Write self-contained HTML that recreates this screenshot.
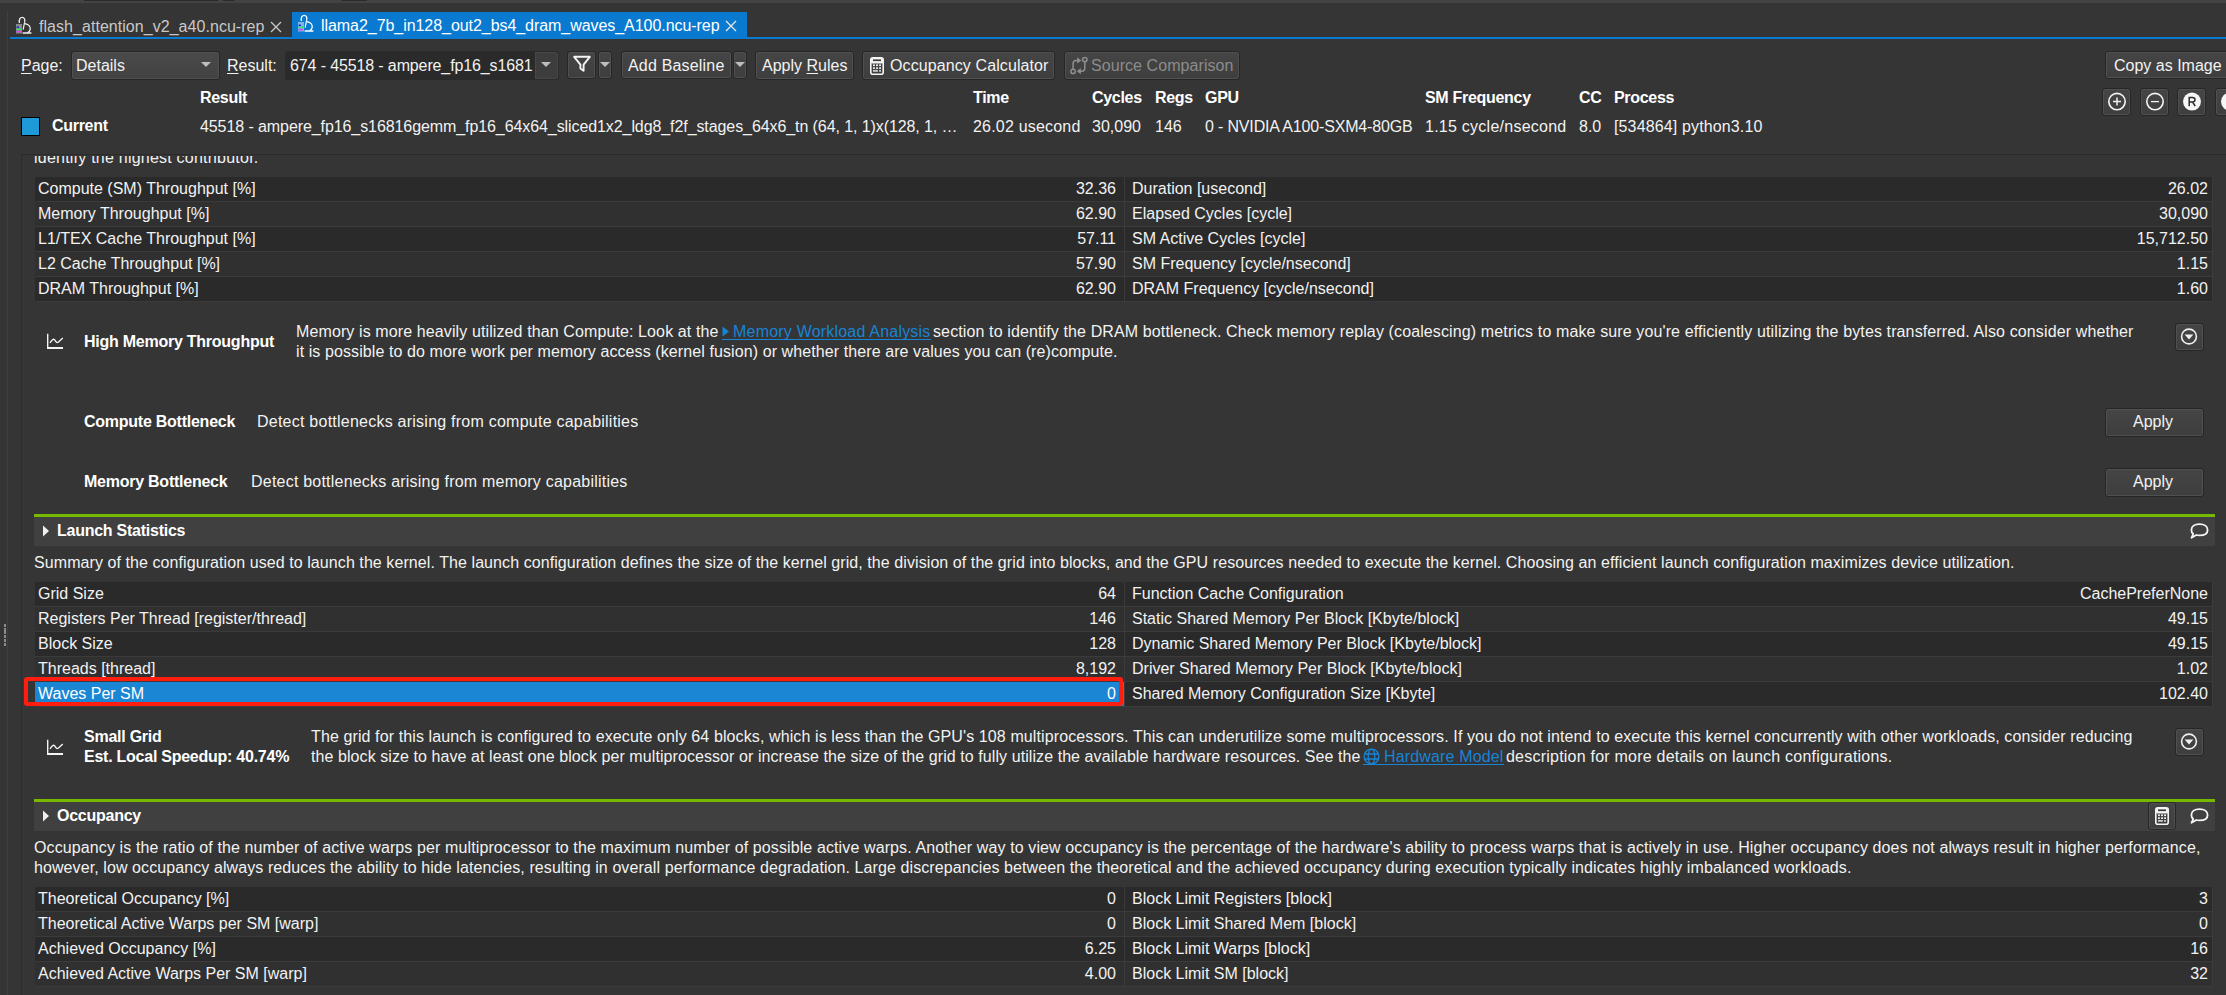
<!DOCTYPE html>
<html><head><meta charset="utf-8"><title>Nsight Compute</title>
<style>
html,body{margin:0;padding:0;}
body{width:2226px;height:995px;overflow:hidden;position:relative;background:#353535;font-family:'Liberation Sans',sans-serif;font-size:16px;color:#f2f2f2;}
u{text-decoration:underline;text-underline-offset:2px;}
</style></head><body>
<div style="position:absolute;left:0px;top:0px;width:2226px;height:3px;background:#434343"></div><div style="position:absolute;left:84px;top:0px;width:134px;height:1px;background:#2a2a2a"></div><div style="position:absolute;left:223px;top:0px;width:11px;height:1px;background:#2a2a2a"></div><div style="position:absolute;left:342px;top:0px;width:25px;height:1px;background:#2a2a2a"></div><div style="position:absolute;left:7px;top:11px;width:1px;height:984px;background:#3f3f3f"></div><div style="position:absolute;left:4px;top:624.0px;width:2px;height:3px;background:#8a8a8a"></div><div style="position:absolute;left:4px;top:627.7px;width:2px;height:3px;background:#8a8a8a"></div><div style="position:absolute;left:4px;top:631.4px;width:2px;height:3px;background:#8a8a8a"></div><div style="position:absolute;left:4px;top:635.1px;width:2px;height:3px;background:#8a8a8a"></div><div style="position:absolute;left:4px;top:638.8px;width:2px;height:3px;background:#8a8a8a"></div><div style="position:absolute;left:4px;top:642.5px;width:2px;height:3px;background:#8a8a8a"></div><div style="position:absolute;left:292px;top:12px;width:455px;height:25px;background:#0a7ad0"></div><div style="position:absolute;left:10px;top:37px;width:2216px;height:2px;background:#0a7ad0"></div><svg style="position:absolute;left:14px;top:15px" width="20" height="20" viewBox="0 0 20 20"><rect x="2" y="9" width="6" height="9.5" fill="#a6a6a6" opacity="0.75"/>
<rect x="2.6" y="11.6" width="2.4" height="1.4" rx="0.6" fill="#1020ff"/><rect x="2.6" y="13.6" width="5" height="1.6" fill="#20f050"/><rect x="2.6" y="15.8" width="4.4" height="1.6" fill="#e040f0"/>
<path d="M5.5 8 C4.6 4.5 6.2 2.4 8.2 2.4 C10.2 2.4 11.4 4.2 10.6 7.4" fill="none" stroke="#f0f0f0" stroke-width="1.3"/>
<path d="M10.6 7.4 C10.2 9.5 9.6 12 9.2 14.6" fill="none" stroke="#f0f0f0" stroke-width="1.2"/>
<path d="M10.8 8.6 C14.6 9.2 16.6 11.8 16.2 14.4 C15.9 16.2 14.8 17.2 13.6 17.6" fill="none" stroke="#f0f0f0" stroke-width="1.3"/>
<path d="M8.6 18 H17.4" stroke="#f0f0f0" stroke-width="1.5"/></svg><div style="position:absolute;top:17px;font-size:16px;line-height:20px;font-weight:400;color:#c8c8c8;white-space:nowrap;letter-spacing:0.0443px;left:39px;">flash_attention_v2_a40.ncu-rep</div><svg style="position:absolute;left:270px;top:21px" width="12" height="12" viewBox="0 0 12 12"><path d="M1 1 L11 11 M11 1 L1 11" stroke="#c8c8c8" stroke-width="1.3"/></svg><svg style="position:absolute;left:296px;top:13px" width="20" height="20" viewBox="0 0 20 20"><rect x="2" y="9" width="6" height="9.5" fill="#a9c9e8" opacity="0.75"/>
<rect x="2.6" y="11.6" width="2.4" height="1.4" rx="0.6" fill="#1020ff"/><rect x="2.6" y="13.6" width="5" height="1.6" fill="#20f050"/><rect x="2.6" y="15.8" width="4.4" height="1.6" fill="#e040f0"/>
<path d="M5.5 8 C4.6 4.5 6.2 2.4 8.2 2.4 C10.2 2.4 11.4 4.2 10.6 7.4" fill="none" stroke="#ffffff" stroke-width="1.3"/>
<path d="M10.6 7.4 C10.2 9.5 9.6 12 9.2 14.6" fill="none" stroke="#ffffff" stroke-width="1.2"/>
<path d="M10.8 8.6 C14.6 9.2 16.6 11.8 16.2 14.4 C15.9 16.2 14.8 17.2 13.6 17.6" fill="none" stroke="#ffffff" stroke-width="1.3"/>
<path d="M8.6 18 H17.4" stroke="#ffffff" stroke-width="1.5"/></svg><div style="position:absolute;top:16px;font-size:16px;line-height:20px;font-weight:400;color:#ffffff;white-space:nowrap;letter-spacing:-0.0557px;left:321px;">llama2_7b_in128_out2_bs4_dram_waves_A100.ncu-rep</div><svg style="position:absolute;left:725px;top:20px" width="12" height="12" viewBox="0 0 12 12"><path d="M1 1 L11 11 M11 1 L1 11" stroke="#e8e8e8" stroke-width="1.3"/></svg><div style="position:absolute;top:56px;font-size:16px;line-height:20px;font-weight:400;color:#f2f2f2;white-space:nowrap;left:21px;"><u>P</u>age:</div><div style="position:absolute;left:71px;top:51px;width:149px;height:29px;box-sizing:border-box;background:linear-gradient(#4a4a4a,#424242);border:1px solid #262626;border-radius:3px;box-shadow:inset 0 0 0 1px #505050"></div><div style="position:absolute;top:56px;font-size:16px;line-height:20px;font-weight:400;color:#f2f2f2;white-space:nowrap;left:76px;">Details</div><svg style="position:absolute;left:200px;top:61px" width="12" height="8" viewBox="0 0 12 8"><path d="M1 1 L11 1 L6 6 Z" fill="#bdbdbd"/></svg><div style="position:absolute;top:56px;font-size:16px;line-height:20px;font-weight:400;color:#f2f2f2;white-space:nowrap;left:227px;"><u>R</u>esult:</div><div style="position:absolute;left:285px;top:51px;width:274px;height:29px;background:#2a2a2a;border-radius:3px"></div><div style="position:absolute;left:534px;top:51px;width:25px;height:29px;box-sizing:border-box;background:#3d3d3d;border-radius:0 3px 3px 0;border:1px solid #2a2a2a;box-shadow:inset 0 0 0 1px #474747"></div><div style="position:absolute;top:56px;font-size:16px;line-height:20px;font-weight:400;color:#f2f2f2;white-space:nowrap;letter-spacing:-0.126px;left:290px;">674 - 45518 - ampere_fp16_s1681</div><svg style="position:absolute;left:540px;top:61px" width="12" height="8" viewBox="0 0 12 8"><path d="M1 1 L11 1 L6 6 Z" fill="#bdbdbd"/></svg><div style="position:absolute;left:567px;top:51px;width:29px;height:28px;box-sizing:border-box;background:linear-gradient(#454545,#3e3e3e);border:1px solid #262626;border-radius:3px;box-shadow:inset 0 0 0 1px #505050"></div><svg style="position:absolute;left:572px;top:55px" width="20" height="18" viewBox="0 0 20 18"><path d="M2.2 1.8 H17.8 L11.6 9.6 V15.8 L8.4 13.4 V9.6 Z" fill="none" stroke="#f4f4f4" stroke-width="1.9" stroke-linejoin="round"/></svg><div style="position:absolute;left:598px;top:51px;width:14px;height:28px;box-sizing:border-box;background:linear-gradient(#454545,#3e3e3e);border:1px solid #262626;border-radius:3px;box-shadow:inset 0 0 0 1px #505050"></div><svg style="position:absolute;left:599px;top:61px" width="12" height="8" viewBox="0 0 12 8"><path d="M1 1 L11 1 L6 6 Z" fill="#bdbdbd"/></svg><div style="position:absolute;left:621px;top:51px;width:111px;height:28px;box-sizing:border-box;background:linear-gradient(#454545,#3e3e3e);border:1px solid #262626;border-radius:3px;box-shadow:inset 0 0 0 1px #505050"></div><div style="position:absolute;top:56px;font-size:16px;line-height:20px;font-weight:400;color:#f2f2f2;white-space:nowrap;letter-spacing:0.1836px;left:628px;">Add Baseline</div><div style="position:absolute;left:733px;top:51px;width:14px;height:28px;box-sizing:border-box;background:linear-gradient(#454545,#3e3e3e);border:1px solid #262626;border-radius:3px;box-shadow:inset 0 0 0 1px #505050"></div><svg style="position:absolute;left:734px;top:61px" width="12" height="8" viewBox="0 0 12 8"><path d="M1 1 L11 1 L6 6 Z" fill="#bdbdbd"/></svg><div style="position:absolute;left:755px;top:51px;width:99px;height:29px;box-sizing:border-box;background:linear-gradient(#454545,#3e3e3e);border:1px solid #262626;border-radius:3px;box-shadow:inset 0 0 0 1px #505050"></div><div style="position:absolute;top:56px;font-size:16px;line-height:20px;font-weight:400;color:#f2f2f2;white-space:nowrap;letter-spacing:0.0099px;left:762px;">Apply <u>R</u>ules</div><div style="position:absolute;left:862px;top:51px;width:193px;height:29px;box-sizing:border-box;background:linear-gradient(#454545,#3e3e3e);border:1px solid #262626;border-radius:3px;box-shadow:inset 0 0 0 1px #505050"></div><svg style="position:absolute;left:870px;top:57px" width="14" height="18" viewBox="0 0 14 18"><rect x="0.8" y="0.8" width="12.4" height="16.4" rx="2" fill="none" stroke="#f4f4f4" stroke-width="1.6"/><rect x="1" y="1" width="12" height="5.4" rx="1.5" fill="#f4f4f4"/><rect x="3" y="2.4" width="8" height="1.7" fill="#3a3a3a"/><g fill="#f0f0f0"><rect x="3" y="7.4" width="1.9" height="1.7"/><rect x="6.05" y="7.4" width="1.9" height="1.7"/><rect x="9.1" y="7.4" width="1.9" height="1.7"/><rect x="3" y="10.3" width="1.9" height="1.7"/><rect x="6.05" y="10.3" width="1.9" height="1.7"/><rect x="9.1" y="10.3" width="1.9" height="1.7"/><rect x="3" y="13.2" width="4.9" height="1.4"/><rect x="9.1" y="13.2" width="1.9" height="1.4"/></g></svg><div style="position:absolute;top:56px;font-size:16px;line-height:20px;font-weight:400;color:#f2f2f2;white-space:nowrap;letter-spacing:0.0992px;left:890px;">Occupancy Calculator</div><div style="position:absolute;left:1064px;top:51px;width:176px;height:29px;box-sizing:border-box;background:linear-gradient(#454545,#3e3e3e);border:1px solid #262626;border-radius:3px;box-shadow:inset 0 0 0 1px #505050"></div><svg style="position:absolute;left:1062px;top:50px" width="40" height="32" viewBox="0 0 40 32"><g fill="none" stroke="#8e8e8e" stroke-width="1.5"><circle cx="22.8" cy="9.6" r="2.2"/><circle cx="11.1" cy="21.4" r="2.2"/><path d="M11.1 19.2 V13.8 Q11.1 10.6 14.2 10.6 H16"/><path d="M22.8 11.8 V18.2 Q22.8 21.2 19.8 21.2 H18"/></g><g fill="#8e8e8e"><path d="M15.2 7.3 L19.3 10.5 L15.2 13.6 Z"/><path d="M18.8 18.1 L14.8 21.2 L18.8 24.3 Z"/></g></svg><div style="position:absolute;top:56px;font-size:16px;line-height:20px;font-weight:400;color:#8c8c8c;white-space:nowrap;letter-spacing:0.0643px;left:1091px;">Source Comparison</div><div style="position:absolute;left:2105px;top:51px;width:131px;height:28px;box-sizing:border-box;background:linear-gradient(#454545,#3e3e3e);border:1px solid #262626;border-radius:3px;box-shadow:inset 0 0 0 1px #505050"></div><div style="position:absolute;top:56px;font-size:16px;line-height:20px;font-weight:400;color:#f2f2f2;white-space:nowrap;left:2114px;">Copy as Image</div><div style="position:absolute;top:88px;font-size:16px;line-height:20px;font-weight:700;color:#ffffff;white-space:nowrap;letter-spacing:-0.3px;left:200px;">Result</div><div style="position:absolute;top:88px;font-size:16px;line-height:20px;font-weight:700;color:#ffffff;white-space:nowrap;letter-spacing:-0.3px;left:973px;">Time</div><div style="position:absolute;top:88px;font-size:16px;line-height:20px;font-weight:700;color:#ffffff;white-space:nowrap;letter-spacing:-0.3px;left:1092px;">Cycles</div><div style="position:absolute;top:88px;font-size:16px;line-height:20px;font-weight:700;color:#ffffff;white-space:nowrap;letter-spacing:-0.3px;left:1155px;">Regs</div><div style="position:absolute;top:88px;font-size:16px;line-height:20px;font-weight:700;color:#ffffff;white-space:nowrap;letter-spacing:-0.3px;left:1205px;">GPU</div><div style="position:absolute;top:88px;font-size:16px;line-height:20px;font-weight:700;color:#ffffff;white-space:nowrap;letter-spacing:-0.3px;left:1425px;">SM Frequency</div><div style="position:absolute;top:88px;font-size:16px;line-height:20px;font-weight:700;color:#ffffff;white-space:nowrap;letter-spacing:-0.3px;left:1579px;">CC</div><div style="position:absolute;top:88px;font-size:16px;line-height:20px;font-weight:700;color:#ffffff;white-space:nowrap;letter-spacing:-0.3px;left:1614px;">Process</div><div style="position:absolute;left:21px;top:117px;width:19px;height:19px;box-sizing:border-box;background:#1e9ad9;border:1px solid #000"></div><div style="position:absolute;top:116px;font-size:16px;line-height:20px;font-weight:700;color:#ffffff;white-space:nowrap;letter-spacing:-0.3px;left:52px;">Current</div><div style="position:absolute;top:117px;font-size:16px;line-height:20px;font-weight:400;color:#f2f2f2;white-space:nowrap;letter-spacing:-0.0863px;left:200px;">45518 - ampere_fp16_s16816gemm_fp16_64x64_sliced1x2_ldg8_f2f_stages_64x6_tn (64, 1, 1)x(128, 1, …</div><div style="position:absolute;top:117px;font-size:16px;line-height:20px;font-weight:400;color:#f2f2f2;white-space:nowrap;letter-spacing:0.1935px;left:973px;">26.02 usecond</div><div style="position:absolute;top:117px;font-size:16px;line-height:20px;font-weight:400;color:#f2f2f2;white-space:nowrap;left:1092px;">30,090</div><div style="position:absolute;top:117px;font-size:16px;line-height:20px;font-weight:400;color:#f2f2f2;white-space:nowrap;left:1155px;">146</div><div style="position:absolute;top:117px;font-size:16px;line-height:20px;font-weight:400;color:#f2f2f2;white-space:nowrap;letter-spacing:-0.1663px;left:1205px;">0 - NVIDIA A100-SXM4-80GB</div><div style="position:absolute;top:117px;font-size:16px;line-height:20px;font-weight:400;color:#f2f2f2;white-space:nowrap;letter-spacing:0.2509px;left:1425px;">1.15 cycle/nsecond</div><div style="position:absolute;top:117px;font-size:16px;line-height:20px;font-weight:400;color:#f2f2f2;white-space:nowrap;left:1579px;">8.0</div><div style="position:absolute;top:117px;font-size:16px;line-height:20px;font-weight:400;color:#f2f2f2;white-space:nowrap;letter-spacing:0.1365px;left:1614px;">[534864] python3.10</div><div style="position:absolute;left:2102px;top:88px;width:29px;height:28px;box-sizing:border-box;background:linear-gradient(#454545,#3e3e3e);border:1px solid #262626;border-radius:3px;box-shadow:inset 0 0 0 1px #505050"></div><div style="position:absolute;left:2140px;top:88px;width:29px;height:28px;box-sizing:border-box;background:linear-gradient(#454545,#3e3e3e);border:1px solid #262626;border-radius:3px;box-shadow:inset 0 0 0 1px #505050"></div><div style="position:absolute;left:2177px;top:88px;width:29px;height:28px;box-sizing:border-box;background:linear-gradient(#454545,#3e3e3e);border:1px solid #262626;border-radius:3px;box-shadow:inset 0 0 0 1px #505050"></div><div style="position:absolute;left:2215px;top:88px;width:29px;height:28px;box-sizing:border-box;background:linear-gradient(#454545,#3e3e3e);border:1px solid #262626;border-radius:3px;box-shadow:inset 0 0 0 1px #505050"></div><svg style="position:absolute;left:2107px;top:92px" width="20" height="20" viewBox="0 0 20 20"><circle cx="10" cy="9.6" r="8.2" fill="none" stroke="#f4f4f4" stroke-width="1.6"/><path d="M10 5.6 V13.6 M6 9.6 H14" stroke="#f0f0f0" stroke-width="1.5"/></svg><svg style="position:absolute;left:2145px;top:92px" width="20" height="20" viewBox="0 0 20 20"><circle cx="10" cy="9.6" r="8.2" fill="none" stroke="#f4f4f4" stroke-width="1.6"/><path d="M6 9.6 H14" stroke="#f0f0f0" stroke-width="1.3"/></svg><svg style="position:absolute;left:2182px;top:92px" width="20" height="20" viewBox="0 0 20 20"><circle cx="10" cy="9.6" r="9" fill="#f6f6f6"/><path d="M7.2 14.2 V5.4 H10.4 C12.2 5.4 13 6.4 13 7.7 C13 9 12.2 10 10.4 10 H7.2 M10.6 10 L13.2 14.2" fill="none" stroke="#2a2a2a" stroke-width="1.5"/></svg><svg style="position:absolute;left:2220px;top:92px" width="20" height="20" viewBox="0 0 20 20"><circle cx="10" cy="9.6" r="9" fill="#f6f6f6"/></svg><div style="position:absolute;left:21px;top:154px;width:2205px;height:1px;background:#2b2b2b"></div><div style="position:absolute;left:21px;top:154px;width:1px;height:841px;background:#2c2c2c"></div><div style="position:absolute;left:22px;top:156px;width:2204px;height:20px;overflow:hidden"><div style="position:absolute;top:-8px;font-size:16px;line-height:20px;font-weight:400;color:#f2f2f2;white-space:nowrap;letter-spacing:0.2263px;left:12px;">identify the highest contributor.</div></div><div style="position:absolute;left:35px;top:177px;width:2177px;height:24px;background:#2a2a2a"></div><div style="position:absolute;left:35px;top:201px;width:2177px;height:1px;background:#3b3b3b"></div><div style="position:absolute;top:179px;font-size:16px;line-height:20px;font-weight:400;color:#f2f2f2;white-space:nowrap;left:38px;">Compute (SM) Throughput [%]</div><div style="position:absolute;top:179px;font-size:16px;line-height:20px;font-weight:400;color:#f2f2f2;white-space:nowrap;right:1110px;">32.36</div><div style="position:absolute;top:179px;font-size:16px;line-height:20px;font-weight:400;color:#f2f2f2;white-space:nowrap;left:1132px;">Duration [usecond]</div><div style="position:absolute;top:179px;font-size:16px;line-height:20px;font-weight:400;color:#f2f2f2;white-space:nowrap;right:18px;">26.02</div><div style="position:absolute;left:35px;top:202px;width:2177px;height:24px;background:#303030"></div><div style="position:absolute;left:35px;top:226px;width:2177px;height:1px;background:#3b3b3b"></div><div style="position:absolute;top:204px;font-size:16px;line-height:20px;font-weight:400;color:#f2f2f2;white-space:nowrap;left:38px;">Memory Throughput [%]</div><div style="position:absolute;top:204px;font-size:16px;line-height:20px;font-weight:400;color:#f2f2f2;white-space:nowrap;right:1110px;">62.90</div><div style="position:absolute;top:204px;font-size:16px;line-height:20px;font-weight:400;color:#f2f2f2;white-space:nowrap;left:1132px;">Elapsed Cycles [cycle]</div><div style="position:absolute;top:204px;font-size:16px;line-height:20px;font-weight:400;color:#f2f2f2;white-space:nowrap;right:18px;">30,090</div><div style="position:absolute;left:35px;top:227px;width:2177px;height:24px;background:#2a2a2a"></div><div style="position:absolute;left:35px;top:251px;width:2177px;height:1px;background:#3b3b3b"></div><div style="position:absolute;top:229px;font-size:16px;line-height:20px;font-weight:400;color:#f2f2f2;white-space:nowrap;left:38px;">L1/TEX Cache Throughput [%]</div><div style="position:absolute;top:229px;font-size:16px;line-height:20px;font-weight:400;color:#f2f2f2;white-space:nowrap;right:1110px;">57.11</div><div style="position:absolute;top:229px;font-size:16px;line-height:20px;font-weight:400;color:#f2f2f2;white-space:nowrap;left:1132px;">SM Active Cycles [cycle]</div><div style="position:absolute;top:229px;font-size:16px;line-height:20px;font-weight:400;color:#f2f2f2;white-space:nowrap;right:18px;">15,712.50</div><div style="position:absolute;left:35px;top:252px;width:2177px;height:24px;background:#303030"></div><div style="position:absolute;left:35px;top:276px;width:2177px;height:1px;background:#3b3b3b"></div><div style="position:absolute;top:254px;font-size:16px;line-height:20px;font-weight:400;color:#f2f2f2;white-space:nowrap;left:38px;">L2 Cache Throughput [%]</div><div style="position:absolute;top:254px;font-size:16px;line-height:20px;font-weight:400;color:#f2f2f2;white-space:nowrap;right:1110px;">57.90</div><div style="position:absolute;top:254px;font-size:16px;line-height:20px;font-weight:400;color:#f2f2f2;white-space:nowrap;left:1132px;">SM Frequency [cycle/nsecond]</div><div style="position:absolute;top:254px;font-size:16px;line-height:20px;font-weight:400;color:#f2f2f2;white-space:nowrap;right:18px;">1.15</div><div style="position:absolute;left:35px;top:277px;width:2177px;height:24px;background:#2a2a2a"></div><div style="position:absolute;left:35px;top:301px;width:2177px;height:1px;background:#3b3b3b"></div><div style="position:absolute;top:279px;font-size:16px;line-height:20px;font-weight:400;color:#f2f2f2;white-space:nowrap;left:38px;">DRAM Throughput [%]</div><div style="position:absolute;top:279px;font-size:16px;line-height:20px;font-weight:400;color:#f2f2f2;white-space:nowrap;right:1110px;">62.90</div><div style="position:absolute;top:279px;font-size:16px;line-height:20px;font-weight:400;color:#f2f2f2;white-space:nowrap;left:1132px;">DRAM Frequency [cycle/nsecond]</div><div style="position:absolute;top:279px;font-size:16px;line-height:20px;font-weight:400;color:#f2f2f2;white-space:nowrap;right:18px;">1.60</div><div style="position:absolute;left:1124px;top:177px;width:1px;height:125px;background:#3b3b3b"></div><div style="position:absolute;left:2212px;top:177px;width:1px;height:125px;background:#3b3b3b"></div><svg style="position:absolute;left:46px;top:333px" width="18" height="17" viewBox="0 0 18 17"><path d="M1.7 0.8 V15" fill="none" stroke="#f4f4f4" stroke-width="1.4"/><path d="M1 15 H17" fill="none" stroke="#f4f4f4" stroke-width="2"/><path d="M4 9.8 C5.5 7.6 6.6 6.2 7.8 6.2 C9 6.2 9.8 9.6 11.2 9.6 C12.6 9.6 14.6 6.6 16.8 5.2" fill="none" stroke="#f4f4f4" stroke-width="1.4"/></svg><div style="position:absolute;top:332px;font-size:16px;line-height:20px;font-weight:700;color:#ffffff;white-space:nowrap;letter-spacing:-0.25px;left:84px;">High Memory Throughput</div><div style="position:absolute;top:322px;font-size:16px;line-height:20px;font-weight:400;color:#f2f2f2;white-space:nowrap;letter-spacing:0.1105px;left:296px;">Memory is more heavily utilized than Compute: Look at the</div><div style="position:absolute;top:322px;font-size:16px;line-height:20px;font-weight:400;color:#f2f2f2;white-space:nowrap;letter-spacing:0.2018px;left:722px;"><span style="color:#1784d6;position:relative"><svg width="8" height="11" viewBox="0 0 8 11" style="vertical-align:0px;margin-right:3px"><path d="M0.5 0.5 L7 5.5 L0.5 10.5 Z" fill="#1784d6"/></svg>Memory Workload Analysis<span style="position:absolute;left:0;right:0;top:16px;height:1px;background:#1784d6"></span></span></div><div style="position:absolute;top:322px;font-size:16px;line-height:20px;font-weight:400;color:#f2f2f2;white-space:nowrap;letter-spacing:0.121px;left:933px;">section to identify the DRAM bottleneck. Check memory replay (coalescing) metrics to make sure you&#x27;re efficiently utilizing the bytes transferred. Also consider whether</div><div style="position:absolute;top:342px;font-size:16px;line-height:20px;font-weight:400;color:#f2f2f2;white-space:nowrap;letter-spacing:0.0928px;left:296px;">it is possible to do more work per memory access (kernel fusion) or whether there are values you can (re)compute.</div><div style="position:absolute;left:2175px;top:323px;width:29px;height:28px;box-sizing:border-box;background:linear-gradient(#454545,#3e3e3e);border:1px solid #262626;border-radius:3px;box-shadow:inset 0 0 0 1px #505050"></div><svg style="position:absolute;left:2180px;top:328px" width="18" height="18" viewBox="0 0 18 18"><circle cx="9" cy="8.5" r="7.4" fill="none" stroke="#f0f0f0" stroke-width="1.6"/><path d="M4.6 6.4 H13.4 L9 11.6 Z" fill="#f0f0f0"/></svg><div style="position:absolute;top:412px;font-size:16px;line-height:20px;font-weight:700;color:#ffffff;white-space:nowrap;letter-spacing:-0.25px;left:84px;">Compute Bottleneck</div><div style="position:absolute;top:412px;font-size:16px;line-height:20px;font-weight:400;color:#f2f2f2;white-space:nowrap;letter-spacing:0.2392px;left:257px;">Detect bottlenecks arising from compute capabilities</div><div style="position:absolute;left:2105px;top:408px;width:99px;height:29px;box-sizing:border-box;background:linear-gradient(#454545,#3e3e3e);border:1px solid #262626;border-radius:3px;box-shadow:inset 0 0 0 1px #505050"></div><div style="position:absolute;top:412px;font-size:16px;line-height:20px;font-weight:400;color:#f2f2f2;white-space:nowrap;left:2133px;">Apply</div><div style="position:absolute;top:472px;font-size:16px;line-height:20px;font-weight:700;color:#ffffff;white-space:nowrap;letter-spacing:-0.25px;left:84px;">Memory Bottleneck</div><div style="position:absolute;top:472px;font-size:16px;line-height:20px;font-weight:400;color:#f2f2f2;white-space:nowrap;letter-spacing:0.216px;left:251px;">Detect bottlenecks arising from memory capabilities</div><div style="position:absolute;left:2105px;top:468px;width:99px;height:29px;box-sizing:border-box;background:linear-gradient(#454545,#3e3e3e);border:1px solid #262626;border-radius:3px;box-shadow:inset 0 0 0 1px #505050"></div><div style="position:absolute;top:472px;font-size:16px;line-height:20px;font-weight:400;color:#f2f2f2;white-space:nowrap;left:2133px;">Apply</div><div style="position:absolute;left:34px;top:514px;width:2181px;height:3px;background:#76b900"></div><div style="position:absolute;left:34px;top:517px;width:2181px;height:29px;background:#404040"></div><svg style="position:absolute;left:41px;top:524px" width="10" height="14" viewBox="0 0 10 14"><path d="M2 1.5 L8 7 L2 12.5 Z" fill="#f0f0f0"/></svg><div style="position:absolute;top:521px;font-size:16px;line-height:20px;font-weight:700;color:#ffffff;white-space:nowrap;letter-spacing:-0.25px;left:57px;">Launch Statistics</div><svg style="position:absolute;left:2190px;top:523px" width="19" height="17" viewBox="0 0 19 17"><path d="M9.5 1.2 C14.5 1.2 17.6 3.6 17.6 7 C17.6 10.4 14.5 12.4 9.5 12.4 C8.3 12.4 7.2 12.3 6.3 12 L1.5 14.8 L3.2 11 C2 10 1.4 8.6 1.4 7 C1.4 3.6 4.5 1.2 9.5 1.2 Z" fill="none" stroke="#f4f4f4" stroke-width="1.8" stroke-linejoin="round"/></svg><div style="position:absolute;top:553px;font-size:16px;line-height:20px;font-weight:400;color:#f2f2f2;white-space:nowrap;letter-spacing:0.0776px;left:34px;">Summary of the configuration used to launch the kernel. The launch configuration defines the size of the kernel grid, the division of the grid into blocks, and the GPU resources needed to execute the kernel. Choosing an efficient launch configuration maximizes device utilization.</div><div style="position:absolute;left:35px;top:582px;width:2177px;height:24px;background:#2a2a2a"></div><div style="position:absolute;left:35px;top:606px;width:2177px;height:1px;background:#3b3b3b"></div><div style="position:absolute;top:584px;font-size:16px;line-height:20px;font-weight:400;color:#f2f2f2;white-space:nowrap;left:38px;">Grid Size</div><div style="position:absolute;top:584px;font-size:16px;line-height:20px;font-weight:400;color:#f2f2f2;white-space:nowrap;right:1110px;">64</div><div style="position:absolute;top:584px;font-size:16px;line-height:20px;font-weight:400;color:#f2f2f2;white-space:nowrap;left:1132px;">Function Cache Configuration</div><div style="position:absolute;top:584px;font-size:16px;line-height:20px;font-weight:400;color:#f2f2f2;white-space:nowrap;right:18px;">CachePreferNone</div><div style="position:absolute;left:35px;top:607px;width:2177px;height:24px;background:#303030"></div><div style="position:absolute;left:35px;top:631px;width:2177px;height:1px;background:#3b3b3b"></div><div style="position:absolute;top:609px;font-size:16px;line-height:20px;font-weight:400;color:#f2f2f2;white-space:nowrap;left:38px;">Registers Per Thread [register/thread]</div><div style="position:absolute;top:609px;font-size:16px;line-height:20px;font-weight:400;color:#f2f2f2;white-space:nowrap;right:1110px;">146</div><div style="position:absolute;top:609px;font-size:16px;line-height:20px;font-weight:400;color:#f2f2f2;white-space:nowrap;left:1132px;">Static Shared Memory Per Block [Kbyte/block]</div><div style="position:absolute;top:609px;font-size:16px;line-height:20px;font-weight:400;color:#f2f2f2;white-space:nowrap;right:18px;">49.15</div><div style="position:absolute;left:35px;top:632px;width:2177px;height:24px;background:#2a2a2a"></div><div style="position:absolute;left:35px;top:656px;width:2177px;height:1px;background:#3b3b3b"></div><div style="position:absolute;top:634px;font-size:16px;line-height:20px;font-weight:400;color:#f2f2f2;white-space:nowrap;left:38px;">Block Size</div><div style="position:absolute;top:634px;font-size:16px;line-height:20px;font-weight:400;color:#f2f2f2;white-space:nowrap;right:1110px;">128</div><div style="position:absolute;top:634px;font-size:16px;line-height:20px;font-weight:400;color:#f2f2f2;white-space:nowrap;left:1132px;">Dynamic Shared Memory Per Block [Kbyte/block]</div><div style="position:absolute;top:634px;font-size:16px;line-height:20px;font-weight:400;color:#f2f2f2;white-space:nowrap;right:18px;">49.15</div><div style="position:absolute;left:35px;top:657px;width:2177px;height:24px;background:#303030"></div><div style="position:absolute;left:35px;top:681px;width:2177px;height:1px;background:#3b3b3b"></div><div style="position:absolute;top:659px;font-size:16px;line-height:20px;font-weight:400;color:#f2f2f2;white-space:nowrap;left:38px;">Threads [thread]</div><div style="position:absolute;top:659px;font-size:16px;line-height:20px;font-weight:400;color:#f2f2f2;white-space:nowrap;right:1110px;">8,192</div><div style="position:absolute;top:659px;font-size:16px;line-height:20px;font-weight:400;color:#f2f2f2;white-space:nowrap;left:1132px;">Driver Shared Memory Per Block [Kbyte/block]</div><div style="position:absolute;top:659px;font-size:16px;line-height:20px;font-weight:400;color:#f2f2f2;white-space:nowrap;right:18px;">1.02</div><div style="position:absolute;left:35px;top:682px;width:2177px;height:24px;background:#2a2a2a"></div><div style="position:absolute;left:35px;top:706px;width:2177px;height:1px;background:#3b3b3b"></div><div style="position:absolute;top:684px;font-size:16px;line-height:20px;font-weight:400;color:#f2f2f2;white-space:nowrap;left:38px;">Waves Per SM</div><div style="position:absolute;top:684px;font-size:16px;line-height:20px;font-weight:400;color:#f2f2f2;white-space:nowrap;right:1110px;">0</div><div style="position:absolute;top:684px;font-size:16px;line-height:20px;font-weight:400;color:#f2f2f2;white-space:nowrap;left:1132px;">Shared Memory Configuration Size [Kbyte]</div><div style="position:absolute;top:684px;font-size:16px;line-height:20px;font-weight:400;color:#f2f2f2;white-space:nowrap;right:18px;">102.40</div><div style="position:absolute;left:1124px;top:582px;width:1px;height:125px;background:#3b3b3b"></div><div style="position:absolute;left:2212px;top:582px;width:1px;height:125px;background:#3b3b3b"></div><div style="position:absolute;left:35px;top:682px;width:1089px;height:24px;background:#1a86d4"></div><div style="position:absolute;top:684px;font-size:16px;line-height:20px;font-weight:400;color:#ffffff;white-space:nowrap;left:38px;">Waves Per SM</div><div style="position:absolute;top:684px;font-size:16px;line-height:20px;font-weight:400;color:#ffffff;white-space:nowrap;right:1110px;">0</div><div style="position:absolute;left:24px;top:677px;width:1099px;height:29px;box-sizing:border-box;border:4px solid #ff1d0f;border-radius:3px"></div><svg style="position:absolute;left:46px;top:739px" width="18" height="17" viewBox="0 0 18 17"><path d="M1.7 0.8 V15" fill="none" stroke="#f4f4f4" stroke-width="1.4"/><path d="M1 15 H17" fill="none" stroke="#f4f4f4" stroke-width="2"/><path d="M4 9.8 C5.5 7.6 6.6 6.2 7.8 6.2 C9 6.2 9.8 9.6 11.2 9.6 C12.6 9.6 14.6 6.6 16.8 5.2" fill="none" stroke="#f4f4f4" stroke-width="1.4"/></svg><div style="position:absolute;top:727px;font-size:16px;line-height:20px;font-weight:700;color:#ffffff;white-space:nowrap;letter-spacing:-0.25px;left:84px;">Small Grid</div><div style="position:absolute;top:747px;font-size:16px;line-height:20px;font-weight:700;color:#ffffff;white-space:nowrap;letter-spacing:-0.25px;left:84px;">Est. Local Speedup: 40.74%</div><div style="position:absolute;top:727px;font-size:16px;line-height:20px;font-weight:400;color:#f2f2f2;white-space:nowrap;letter-spacing:0.1079px;left:311px;">The grid for this launch is configured to execute only 64 blocks, which is less than the GPU&#x27;s 108 multiprocessors. This can underutilize some multiprocessors. If you do not intend to execute this kernel concurrently with other workloads, consider reducing</div><div style="position:absolute;top:747px;font-size:16px;line-height:20px;font-weight:400;color:#f2f2f2;white-space:nowrap;letter-spacing:0.0764px;left:311px;">the block size to have at least one block per multiprocessor or increase the size of the grid to fully utilize the available hardware resources. See the</div><div style="position:absolute;top:747px;font-size:16px;line-height:20px;font-weight:400;color:#f2f2f2;white-space:nowrap;letter-spacing:0.1507px;left:1363px;"><span style="color:#1784d6;position:relative"><svg width="17" height="17" viewBox="0 0 17 17" style="vertical-align:-3px;margin-right:4px"><g fill="none" stroke="#1784d6" stroke-width="1.3"><circle cx="8.5" cy="8.5" r="7.4"/><ellipse cx="8.5" cy="8.5" rx="3.3" ry="7.4"/><path d="M1.5 6 H15.5 M1.5 11 H15.5"/></g></svg>Hardware Model<span style="position:absolute;left:0;right:0;top:16px;height:1px;background:#1784d6"></span></span></div><div style="position:absolute;top:747px;font-size:16px;line-height:20px;font-weight:400;color:#f2f2f2;white-space:nowrap;letter-spacing:0.2234px;left:1506px;">description for more details on launch configurations.</div><div style="position:absolute;left:2175px;top:728px;width:29px;height:28px;box-sizing:border-box;background:linear-gradient(#454545,#3e3e3e);border:1px solid #262626;border-radius:3px;box-shadow:inset 0 0 0 1px #505050"></div><svg style="position:absolute;left:2180px;top:733px" width="18" height="18" viewBox="0 0 18 18"><circle cx="9" cy="8.5" r="7.4" fill="none" stroke="#f0f0f0" stroke-width="1.6"/><path d="M4.6 6.4 H13.4 L9 11.6 Z" fill="#f0f0f0"/></svg><div style="position:absolute;left:34px;top:799px;width:2181px;height:3px;background:#76b900"></div><div style="position:absolute;left:34px;top:802px;width:2181px;height:29px;background:#404040"></div><svg style="position:absolute;left:41px;top:809px" width="10" height="14" viewBox="0 0 10 14"><path d="M2 1.5 L8 7 L2 12.5 Z" fill="#f0f0f0"/></svg><div style="position:absolute;top:806px;font-size:16px;line-height:20px;font-weight:700;color:#ffffff;white-space:nowrap;letter-spacing:-0.25px;left:57px;">Occupancy</div><div style="position:absolute;left:2148px;top:802px;width:28px;height:28px;box-sizing:border-box;background:linear-gradient(#454545,#3e3e3e);border:1px solid #262626;border-radius:3px;box-shadow:inset 0 0 0 1px #505050"></div><svg style="position:absolute;left:2155px;top:807px" width="14" height="18" viewBox="0 0 14 18"><rect x="0.8" y="0.8" width="12.4" height="16.4" rx="2" fill="none" stroke="#f4f4f4" stroke-width="1.6"/><rect x="1" y="1" width="12" height="5.4" rx="1.5" fill="#f4f4f4"/><rect x="3" y="2.4" width="8" height="1.7" fill="#3a3a3a"/><g fill="#f0f0f0"><rect x="3" y="7.4" width="1.9" height="1.7"/><rect x="6.05" y="7.4" width="1.9" height="1.7"/><rect x="9.1" y="7.4" width="1.9" height="1.7"/><rect x="3" y="10.3" width="1.9" height="1.7"/><rect x="6.05" y="10.3" width="1.9" height="1.7"/><rect x="9.1" y="10.3" width="1.9" height="1.7"/><rect x="3" y="13.2" width="4.9" height="1.4"/><rect x="9.1" y="13.2" width="1.9" height="1.4"/></g></svg><svg style="position:absolute;left:2190px;top:808px" width="19" height="17" viewBox="0 0 19 17"><path d="M9.5 1.2 C14.5 1.2 17.6 3.6 17.6 7 C17.6 10.4 14.5 12.4 9.5 12.4 C8.3 12.4 7.2 12.3 6.3 12 L1.5 14.8 L3.2 11 C2 10 1.4 8.6 1.4 7 C1.4 3.6 4.5 1.2 9.5 1.2 Z" fill="none" stroke="#f4f4f4" stroke-width="1.8" stroke-linejoin="round"/></svg><div style="position:absolute;top:838px;font-size:16px;line-height:20px;font-weight:400;color:#f2f2f2;white-space:nowrap;letter-spacing:0.1125px;left:34px;">Occupancy is the ratio of the number of active warps per multiprocessor to the maximum number of possible active warps. Another way to view occupancy is the percentage of the hardware&#x27;s ability to process warps that is actively in use. Higher occupancy does not always result in higher performance,</div><div style="position:absolute;top:858px;font-size:16px;line-height:20px;font-weight:400;color:#f2f2f2;white-space:nowrap;letter-spacing:0.0903px;left:34px;">however, low occupancy always reduces the ability to hide latencies, resulting in overall performance degradation. Large discrepancies between the theoretical and the achieved occupancy during execution typically indicates highly imbalanced workloads.</div><div style="position:absolute;left:35px;top:887px;width:2177px;height:24px;background:#2a2a2a"></div><div style="position:absolute;left:35px;top:911px;width:2177px;height:1px;background:#3b3b3b"></div><div style="position:absolute;top:889px;font-size:16px;line-height:20px;font-weight:400;color:#f2f2f2;white-space:nowrap;left:38px;">Theoretical Occupancy [%]</div><div style="position:absolute;top:889px;font-size:16px;line-height:20px;font-weight:400;color:#f2f2f2;white-space:nowrap;right:1110px;">0</div><div style="position:absolute;top:889px;font-size:16px;line-height:20px;font-weight:400;color:#f2f2f2;white-space:nowrap;left:1132px;">Block Limit Registers [block]</div><div style="position:absolute;top:889px;font-size:16px;line-height:20px;font-weight:400;color:#f2f2f2;white-space:nowrap;right:18px;">3</div><div style="position:absolute;left:35px;top:912px;width:2177px;height:24px;background:#303030"></div><div style="position:absolute;left:35px;top:936px;width:2177px;height:1px;background:#3b3b3b"></div><div style="position:absolute;top:914px;font-size:16px;line-height:20px;font-weight:400;color:#f2f2f2;white-space:nowrap;left:38px;">Theoretical Active Warps per SM [warp]</div><div style="position:absolute;top:914px;font-size:16px;line-height:20px;font-weight:400;color:#f2f2f2;white-space:nowrap;right:1110px;">0</div><div style="position:absolute;top:914px;font-size:16px;line-height:20px;font-weight:400;color:#f2f2f2;white-space:nowrap;left:1132px;">Block Limit Shared Mem [block]</div><div style="position:absolute;top:914px;font-size:16px;line-height:20px;font-weight:400;color:#f2f2f2;white-space:nowrap;right:18px;">0</div><div style="position:absolute;left:35px;top:937px;width:2177px;height:24px;background:#2a2a2a"></div><div style="position:absolute;left:35px;top:961px;width:2177px;height:1px;background:#3b3b3b"></div><div style="position:absolute;top:939px;font-size:16px;line-height:20px;font-weight:400;color:#f2f2f2;white-space:nowrap;left:38px;">Achieved Occupancy [%]</div><div style="position:absolute;top:939px;font-size:16px;line-height:20px;font-weight:400;color:#f2f2f2;white-space:nowrap;right:1110px;">6.25</div><div style="position:absolute;top:939px;font-size:16px;line-height:20px;font-weight:400;color:#f2f2f2;white-space:nowrap;left:1132px;">Block Limit Warps [block]</div><div style="position:absolute;top:939px;font-size:16px;line-height:20px;font-weight:400;color:#f2f2f2;white-space:nowrap;right:18px;">16</div><div style="position:absolute;left:35px;top:962px;width:2177px;height:24px;background:#303030"></div><div style="position:absolute;left:35px;top:986px;width:2177px;height:1px;background:#3b3b3b"></div><div style="position:absolute;top:964px;font-size:16px;line-height:20px;font-weight:400;color:#f2f2f2;white-space:nowrap;left:38px;">Achieved Active Warps Per SM [warp]</div><div style="position:absolute;top:964px;font-size:16px;line-height:20px;font-weight:400;color:#f2f2f2;white-space:nowrap;right:1110px;">4.00</div><div style="position:absolute;top:964px;font-size:16px;line-height:20px;font-weight:400;color:#f2f2f2;white-space:nowrap;left:1132px;">Block Limit SM [block]</div><div style="position:absolute;top:964px;font-size:16px;line-height:20px;font-weight:400;color:#f2f2f2;white-space:nowrap;right:18px;">32</div><div style="position:absolute;left:1124px;top:887px;width:1px;height:100px;background:#3b3b3b"></div><div style="position:absolute;left:2212px;top:887px;width:1px;height:100px;background:#3b3b3b"></div>
</body></html>
